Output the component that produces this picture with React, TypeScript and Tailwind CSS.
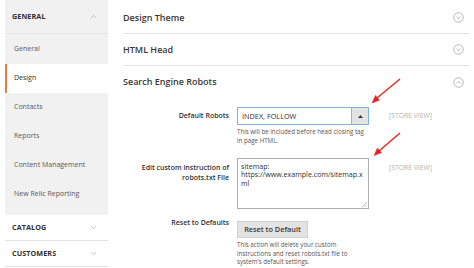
import { ChevronDown, ChevronUp } from "lucide-react";

const navItems = ["General", "Design", "Contacts", "Reports", "Content Management", "New Relic Reporting"];

function CircleChevron({ up }: { up?: boolean }) {
  return (
    <svg width="11" height="11" viewBox="0 0 12 12" fill="none" stroke="#a9a9a9" strokeWidth="0.9">
      <circle cx="6" cy="6" r="5.2" />
      {up ? <path d="M3.8 7 L6 4.9 L8.2 7" /> : <path d="M3.8 5 L6 7.1 L8.2 5" />}
    </svg>
  );
}

function Sidebar() {
  return (
    <aside className="ml-[5px] w-[103px] shrink-0 flex flex-col">
      <div className="bg-[#f1f1f1]">
        <div className="h-[34px] flex items-center justify-between pl-[7px] pr-[10px] border-b border-[#e6e6e6]">
          <span className="text-[7.2px] font-bold tracking-[0.1px] text-[#303030]">GENERAL</span>
          <ChevronUp size={9} strokeWidth={1.5} color="#9a9a9a" />
        </div>
        <ul className="pt-px pb-[6px]">
          {navItems.map((item) => (
            <li
              key={item}
              className={
                item === "Design"
                  ? "h-[29px] flex items-center pl-[7px] bg-white border-l-[2px] border-[#e17d45] text-[7px] text-[#303030]"
                  : "h-[29px] flex items-center pl-[9px] text-[7px] text-[#5a5a5a]"
              }
            >
              {item}
            </li>
          ))}
        </ul>
      </div>
      {["CATALOG", "CUSTOMERS"].map((s) => (
        <div key={s} className="h-[26px] flex items-center justify-between pl-[7px] pr-[10px] border-b border-[#e3e3e3] bg-white">
          <span className="text-[7.2px] font-bold tracking-[0.1px] text-[#303030]">{s}</span>
          <ChevronDown size={9} strokeWidth={1.5} color="#9a9a9a" />
        </div>
      ))}
    </aside>
  );
}

function Section({ title, open }: { title: string; open?: boolean }) {
  return (
    <div className={open ? "h-[32px] flex items-center justify-between pr-[6px]" : "h-[32px] flex items-center justify-between pr-[6px] border-b border-[#e3e3e3]"}>
      <span className="text-[9px] font-semibold text-[#41362f]">{title}</span>
      <CircleChevron up={open} />
    </div>
  );
}

function Label({ children }: { children: React.ReactNode }) {
  return <div className="w-[106px] shrink-0 text-right text-[7px] font-semibold leading-[10px] text-[#303030]">{children}</div>;
}

function Scope() {
  return <div className="ml-[20px] text-[6.8px] text-[#b3b3b3] leading-[10px]">[STORE VIEW]</div>;
}

function Help({ children }: { children: React.ReactNode }) {
  return <p className="mt-[3px] w-[122px] text-[6.2px] leading-[8.5px] text-[#555]">{children}</p>;
}

export default function App() {
  return (
    <div className="relative w-[474px] h-[268px] overflow-hidden bg-white font-['Open_Sans',sans-serif] flex">
      <Sidebar />
      <main className="flex-1 pl-[15px] pr-[4px] pt-[2px]">
        <Section title="Design Theme" />
        <Section title="HTML Head" />
        <Section title="Search Engine Robots" open />

        <div className="mt-[9px] flex flex-col">
          <div className="flex items-start">
            <Label>
              <div className="pt-[4px]">Default Robots</div>
            </Label>
            <div className="ml-[8px] w-[132px]">
              <div className="h-[18px] flex border border-[#7fb1e0] bg-white">
                <div className="flex-1 pl-[4px] flex items-center text-[7.3px] text-[#303030]">INDEX, FOLLOW</div>
                <div className="w-[17px] border-l border-[#adadad] bg-[#e3e3e3] flex items-center justify-center">
                  <svg width="5" height="3" viewBox="0 0 5 3">
                    <path d="M0 3 L2.5 0 L5 3 Z" fill="#41362f" />
                  </svg>
                </div>
              </div>
              <p className="mt-[3px] whitespace-nowrap text-[6.2px] leading-[8.5px] text-[#555]">
                This will be included before head closing tag
                <br />
                in page HTML.
              </p>
            </div>
            <div className="pt-[4px]">
              <Scope />
            </div>
          </div>

          <div className="mt-[13px] flex items-start">
            <Label>
              <div className="pt-[5px]">
                Edit custom instruction of
                <br />
                robots.txt File
              </div>
            </Label>
            <div className="ml-[8px] w-[132px]">
              <div className="relative h-[51px] border border-[#adadad] bg-white px-[3px] pt-[3px] text-[7.1px] leading-[8.3px] text-[#303030] break-all">
                sitemap:
                <br />
                https://www.example.com/sitemap.xml
                <svg className="absolute right-px bottom-px" width="5" height="5" viewBox="0 0 5 5" stroke="#999" strokeWidth="0.6">
                  <path d="M5 0 L0 5 M5 2.5 L2.5 5" />
                </svg>
              </div>
            </div>
            <div className="pt-[5px]">
              <Scope />
            </div>
          </div>

          <div className="mt-[5px] flex items-start">
            <Label>
              <div className="pt-[4px]">Reset to Defaults</div>
            </Label>
            <div className="ml-[8px] w-[150px]">
              <button className="h-[17px] w-[71px] bg-[#e3e3e3] border border-[#d0d0d0] text-[7.3px] font-semibold text-[#41362f]">
                Reset to Default
              </button>
              <Help>This action will delete your custom instructions and reset robots.txt file to system's default settings.</Help>
            </div>
          </div>
        </div>
      </main>

      <svg className="absolute inset-0 pointer-events-none" width="474" height="268" viewBox="0 0 474 268">
        <g stroke="#e02424" strokeWidth="1.4" fill="#e02424">
          <line x1="400" y1="79" x2="377" y2="98" />
          <path d="M372 103 L375.5 95.5 L379.5 100.2 Z" strokeWidth="0.5" />
          <line x1="400" y1="133" x2="379" y2="151" />
          <path d="M374 155.5 L377.5 148 L381.5 152.7 Z" strokeWidth="0.5" />
        </g>
      </svg>
    </div>
  );
}
